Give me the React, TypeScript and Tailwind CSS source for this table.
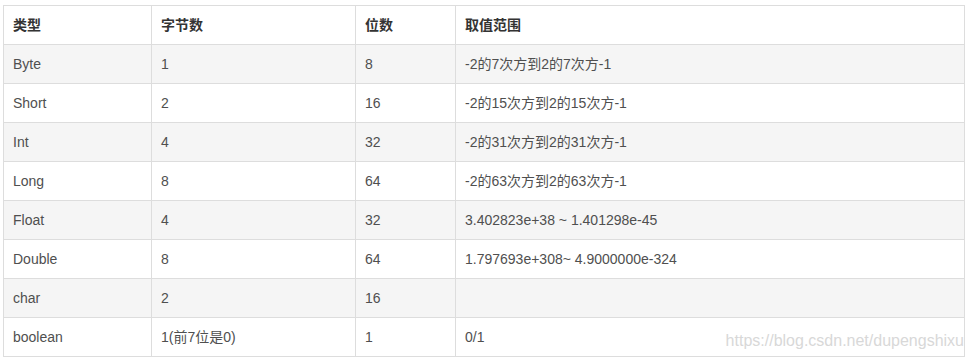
const rows = [
  ['Byte', '1', '8', '-2的7次方到2的7次方-1'],
  ['Short', '2', '16', '-2的15次方到2的15次方-1'],
  ['Int', '4', '32', '-2的31次方到2的31次方-1'],
  ['Long', '8', '64', '-2的63次方到2的63次方-1'],
  ['Float', '4', '32', '3.402823e+38 ~ 1.401298e-45'],
  ['Double', '8', '64', '1.797693e+308~ 4.9000000e-324'],
  ['char', '2', '16', ''],
  ['boolean', '1(前7位是0)', '1', '0/1'],
]

export default function App() {
  return (
    <div className="w-[973px] h-[361px] bg-white pl-[3px] pt-[5px] font-['Liberation_Sans','Noto_Sans_CJK_SC',sans-serif] text-[14px]">
      <div className="relative w-[962px]">
        <table className="w-[962px] table-fixed border-collapse">
          <colgroup>
            <col className="w-[148px]" />
            <col className="w-[204px]" />
            <col className="w-[100px]" />
            <col />
          </colgroup>
          <thead>
            <tr className="h-[39px]">
              {['类型', '字节数', '位数', '取值范围'].map(h => (
                <th key={h} className="border border-[#dddddd] px-[9px] text-left font-bold text-[#333333]">{h}</th>
              ))}
            </tr>
          </thead>
          <tbody>
            {rows.map((r, i) => (
              <tr key={i} className={`h-[39px] ${i % 2 === 0 ? 'bg-[#f5f5f5]' : 'bg-white'}`}>
                {r.map((c, j) => (
                  <td key={j} className="border border-[#dddddd] px-[9px] text-[#4f4f4f]">{c}</td>
                ))}
              </tr>
            ))}
          </tbody>
        </table>
        {/* watermark */}
        <div className="absolute right-[1px] bottom-[8px] text-[16px] text-[#d8d8d8] leading-none">https://blog.csdn.net/dupengshixu</div>
      </div>
    </div>
  )
}
